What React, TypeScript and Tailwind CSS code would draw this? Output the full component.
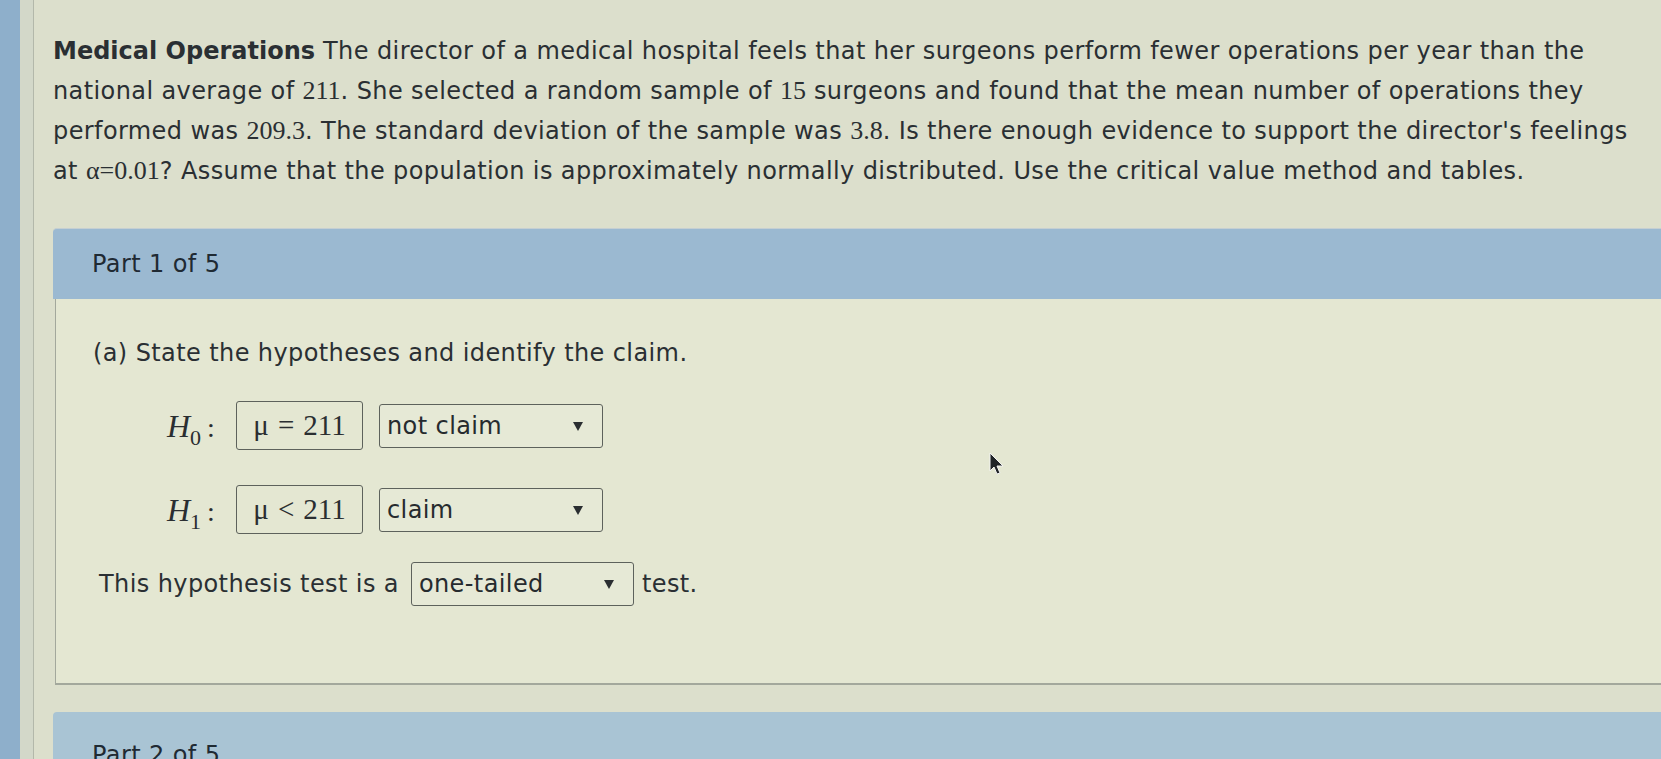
import React from "react";

const sans = { fontFamily: '"DejaVu Sans", Verdana, sans-serif' };

function Num({ children }: { children: React.ReactNode }) {
  return (
    <span className="text-[26px] tracking-normal" style={{ fontFamily: '"Liberation Serif", "Times New Roman", serif' }}>
      {children}
    </span>
  );
}

function Dropdown({ label, w }: { label: string; w: string }) {
  return (
    <div
      className={`flex h-[44px] items-center justify-between rounded-[3px] border border-[#5d625c] bg-[#e6e9d6] pl-[7px] pr-[18px] text-[24px] tracking-[0.4px] text-[#262b2e] ${w}`}
    >
      <span>{label}</span>
      <svg width="12" height="12" viewBox="0 0 12 12">
        <path d="M1 2 L11 2 L6 11 Z" fill="#2a2e31" />
      </svg>
    </div>
  );
}

function MathBox({ rel }: { rel: string }) {
  return (
    <div
      className="flex h-[49px] w-[127px] items-center justify-center rounded-[3px] border border-[#5d625c] text-[29px] text-[#2a2e31]"
      style={{ fontFamily: '"Liberation Serif", "Times New Roman", serif' }}
    >
      <span>μ</span>
      <span className="mx-[9px]">{rel}</span>
      <span>211</span>
    </div>
  );
}

function Hyp({ sub, rel, dd }: { sub: string; rel: string; dd: string }) {
  return (
    <div className="ml-[74px] flex items-center">
      <div
        className="flex w-[69px] items-baseline text-[32px] text-[#2a2e31]"
        style={{ fontFamily: '"Liberation Serif", "Times New Roman", serif' }}
      >
        <span className="italic">H</span>
        <span className="relative top-[8px] text-[22px]">{sub}</span>
        <span className="ml-[6px] text-[28px]">:</span>
      </div>
      <MathBox rel={rel} />
      <div className="ml-[16px]">
        <Dropdown label={dd} w="w-[224px]" />
      </div>
    </div>
  );
}

export default function App() {
  return (
    <div
      className="relative flex h-[759px] w-[1661px] overflow-hidden bg-[#dcdfcc] text-[#2a2f33]"
      style={sans}
    >
      {/* left strips */}
      <div className="w-[20px] shrink-0 bg-[#8eafcb]" />
      <div className="w-[14px] shrink-0 border-r border-[#b3b8aa] bg-[#d3d8c9]" />

      <div className="flex min-w-0 flex-1 flex-col">
        {/* problem text */}
        <div className="pl-[19px] pt-[31px] text-[24px] leading-[40px] tracking-[0.4px]">
          <div className="whitespace-nowrap">
            <span className="font-bold tracking-normal">Medical Operations</span> The director of a medical hospital
            feels that her surgeons perform fewer operations per year than the
          </div>
          <div className="whitespace-nowrap">
            national average of <Num>211</Num>. She selected a random sample of <Num>15</Num> surgeons and found that
            the mean number of operations they
          </div>
          <div className="whitespace-nowrap">
            performed was <Num>209.3</Num>. The standard deviation of the sample was <Num>3.8</Num>. Is there enough
            evidence to support the director's feelings
          </div>
          <div className="whitespace-nowrap">
            at <Num>α=0.01</Num>? Assume that the population is approximately normally distributed. Use the critical
            value method and tables.
          </div>
        </div>

        {/* Part 1 */}
        <div className="ml-[19px] mt-[37px] flex flex-col">
          <div className="flex h-[71px] items-center rounded-tl-[4px] border-t border-[#c5cfd2] bg-[#9bb9d1] pl-[39px] text-[24px] tracking-[0.4px] text-[#1f2a33]">
            Part 1 of 5
          </div>
          <div className="ml-[2px] flex h-[386px] flex-col border-b-2 border-l border-[#a3a89c] bg-[#e4e7d2] pl-[37px] pt-[40px]">
            <div className="text-[24px] leading-[28px] tracking-[0.4px]">
              (a) State the hypotheses and identify the claim.
            </div>
            <div className="mt-[34px]">
              <Hyp sub="0" rel="=" dd="not claim" />
            </div>
            <div className="mt-[35px]">
              <Hyp sub="1" rel="<" dd="claim" />
            </div>
            <div className="ml-[6px] mt-[28px] flex items-center text-[24px] tracking-[0.4px]">
              <span>This hypothesis test is a</span>
              <div className="ml-[12px]">
                <Dropdown label="one-tailed" w="w-[223px]" />
              </div>
              <span className="ml-[8px]">test.</span>
            </div>
          </div>
        </div>

        {/* Part 2 */}
        <div className="ml-[19px] mt-[27px] flex h-[60px] items-end rounded-tl-[4px] bg-[#a9c4d4] pl-[39px] text-[24px] tracking-[0.4px] text-[#1f2a33]">
          <span className="relative top-[14px]">Part 2 of 5</span>
        </div>
      </div>

      {/* mouse cursor */}
      <svg className="absolute left-[988px] top-[452px]" width="18" height="24" viewBox="0 0 18 24">
        <path d="M2 1 L2 19 L6 15 L9 22 L12 21 L9 14 L15 14 Z" fill="#1f2326" stroke="#f2f2f2" strokeWidth="1" />
      </svg>
    </div>
  );
}
